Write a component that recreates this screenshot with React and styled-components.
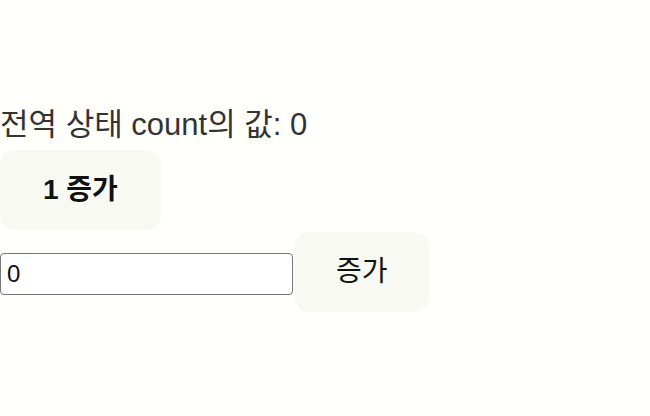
import React, { useState } from "react"
import styled, { createGlobalStyle } from "styled-components"

const GlobalStyle = createGlobalStyle`
  html, body {
    margin: 0;
    padding: 0;
    background: #fffffc;
  }
  body {
    font-family: "Liberation Sans", "Noto Sans CJK KR", sans-serif;
    color: #222;
  }
`

const Page = styled.main`
  padding-top: 106px;
  width: 650px;
  height: 416px;
  box-sizing: border-box;
`

const Title = styled.p`
  margin: 0 0 6px;
  font-size: 31px;
  line-height: 38px;
  color: #333;
`

const Button = styled.button`
  font-family: "Liberation Sans", "Noto Sans CJK KR", sans-serif;
  font-size: 28px;
  font-weight: ${(p) => (p.$bold ? 600 : 400)};
  line-height: 32px;
  color: #111;
  background: #f9f9f4;
  border: none;
  border-radius: 14px;
  padding: 24px ${(p) => p.$padX || 43}px;
  cursor: pointer;
`

const Row = styled.div`
  display: flex;
  align-items: center;
  gap: 2px;
  margin-top: 2px;
`

const Input = styled.input`
  font-family: "Liberation Sans", sans-serif;
  font-size: 24px;
  width: 293px;
  height: 42px;
  box-sizing: border-box;
  padding: 2px 6px;
  border: 1.5px solid #767676;
  border-radius: 4px;
  background: #fff;
  color: #111;
  margin-top: 4px;
`

export default function App() {
  const [count, setCount] = useState(0)
  const [amount, setAmount] = useState("0")

  return (
    <Page>
      <GlobalStyle />
      <Title>전역 상태 count의 값: {count}</Title>
      <Button $bold onClick={() => setCount(count + 1)}>
        1 증가
      </Button>
      <Row>
        <Input value={amount} onChange={(e) => setAmount(e.target.value)} />
        <Button $padX={41} onClick={() => setCount(count + Number(amount || 0))}>
          증가
        </Button>
      </Row>
    </Page>
  )
}
